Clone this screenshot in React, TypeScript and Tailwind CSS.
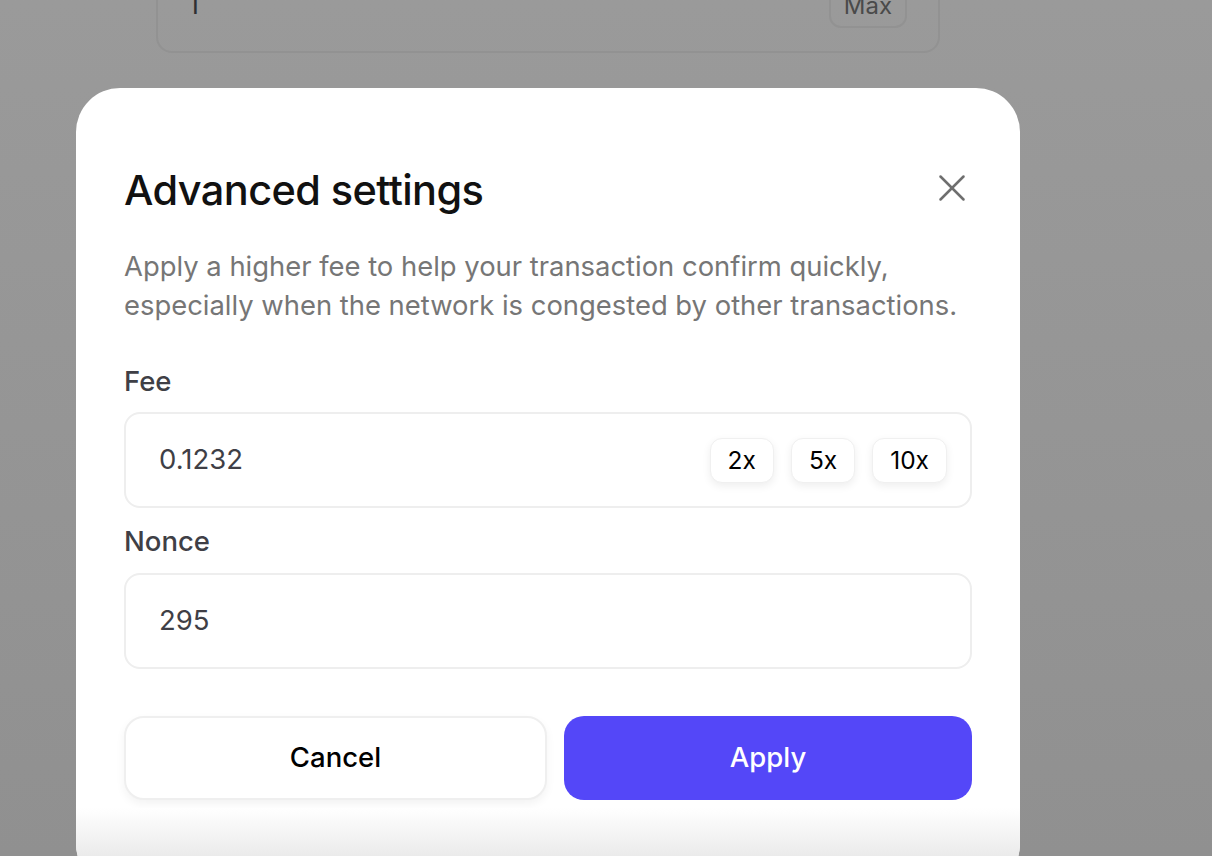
import { X } from "lucide-react";

const font = { fontFamily: "Inter, 'Noto Sans', sans-serif" };

function MultiplierButton({ label }: { label: string }) {
  return (
    <button className="h-[45px] px-[17px] rounded-xl bg-white border border-[#f0f0f0] shadow-[0_3px_8px_rgba(0,0,0,0.07)] text-[24.5px] text-black leading-none">
      {label}
    </button>
  );
}

export default function App() {
  return (
    <div
      className="relative h-[856px] w-full overflow-hidden bg-gradient-to-b from-[#9a9a9a] to-[#909090]"
      style={font}
    >
      {/* page behind the overlay */}
      <div className="pl-[156px] pr-[272px] -mt-[42px]">
        <div className="h-[95px] rounded-2xl border-2 border-[#929292] flex items-center justify-between pl-[30px] pr-[31px]">
          <span className="text-[27px] text-[#2f2f33]">1</span>
          <span className="h-[45px] px-[13px] rounded-xl border-2 border-[#929292] flex items-center text-[24px] text-[#4a4a4a]">
            Max
          </span>
        </div>
      </div>

      {/* modal */}
      <div className="absolute left-[76px] top-[88px] w-[944px] h-[800px] rounded-[44px] bg-white overflow-hidden flex flex-col">
        <div className="px-[48px] pt-[72px]">
          <div className="flex items-center justify-between">
            <h2 className="text-[41.5px] font-medium tracking-[-0.6px] text-[#111] leading-[60px]">
              Advanced settings
            </h2>
            <X size={46} strokeWidth={1.3} className="text-[#6e6e6e] mr-[-3px] -mt-[4px]" />
          </div>

          <p className="mt-[27px] text-[27.4px] leading-[39px] text-[#767676]">
            Apply a higher fee to help your transaction confirm quickly,
            <br />
            especially when the network is congested by other transactions.
          </p>

          <label className="block mt-[38px] text-[27.5px] font-medium text-[#3f3f46] leading-[36px]">
            Fee
          </label>
          <div className="mt-[13px] h-[96px] rounded-2xl border-2 border-[#eeeeee] flex items-center justify-between pl-[33px] pr-[23px]">
            <span className="text-[27.5px] text-[#3f3f46]">0.1232</span>
            <div className="flex gap-[17px]">
              <MultiplierButton label="2x" />
              <MultiplierButton label="5x" />
              <MultiplierButton label="10x" />
            </div>
          </div>

          <label className="block mt-[15px] text-[27.5px] font-medium text-[#3f3f46] leading-[36px]">
            Nonce
          </label>
          <div className="mt-[14px] h-[96px] rounded-2xl border-2 border-[#eeeeee] flex items-center pl-[33px]">
            <span className="text-[27.5px] text-[#3f3f46]">295</span>
          </div>

          <div className="mt-[47px] flex gap-[17px]">
            <button className="w-[423px] h-[84px] rounded-[20px] bg-white border-2 border-[#efefef] shadow-[0_4px_10px_rgba(0,0,0,0.05)] text-[27.5px] font-medium text-black">
              Cancel
            </button>
            <button className="flex-1 h-[84px] rounded-[20px] bg-[#5447f8] text-[27.5px] font-medium text-white">
              Apply
            </button>
          </div>
        </div>
        <div className="mt-[8px] h-[50px] bg-gradient-to-b from-white to-[#eaeaea]" />
        <div className="flex-1 bg-[#eaeaea]" />
      </div>
    </div>
  );
}
